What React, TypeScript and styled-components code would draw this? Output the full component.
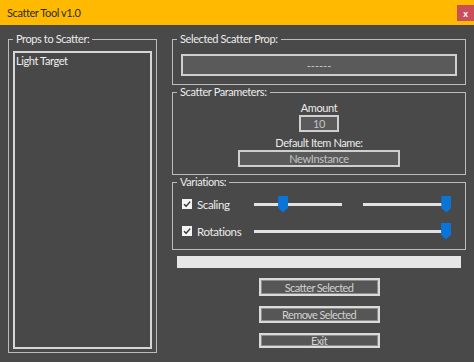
import React from 'react';
import styled, { createGlobalStyle } from 'styled-components';

const GlobalStyle = createGlobalStyle`
    html, body {
        margin: 0;
        padding: 0;
        background: #494949;
    }
    body {
        font-family: Lato, "Open Sans", sans-serif;
        letter-spacing: -0.4px;
    }
`;

type SliderPropsType = {
    width: number
    value: number
}

const Slider = (props: SliderPropsType) => {
    return (
        <Track $width={props.width}>
            <Thumb style={{left: `${props.value * 100}%`}}/>
        </Track>
    );
};

const Check = () => (
    <svg width="10" height="10" viewBox="0 0 10 10">
        <rect x="0" y="0" width="10" height="10" fill="#f4f4f4"/>
        <path d="M2 5.2 L4.1 7.3 L8.2 2.6" stroke="#333" strokeWidth="1.4" fill="none"/>
    </svg>
);

export default function App() {
    return (
        <Window>
            <GlobalStyle/>
            <TitleBar>
                <Title>Scatter Tool v1.0</Title>
                <CloseButton>x</CloseButton>
            </TitleBar>
            <Body>
                <Group $height={321}>
                    <Legend>Props to Scatter:</Legend>
                    <ListBox>
                        <ListItem>Light Target</ListItem>
                    </ListBox>
                </Group>
                <RightColumn>
                    <Group $height={53}>
                        <Legend>Selected Scatter Prop:</Legend>
                        <SelectedButton>------</SelectedButton>
                    </Group>
                    <Group $height={90}>
                        <Legend>Scatter Parameters:</Legend>
                        <Params>
                            <FieldLabel>Amount</FieldLabel>
                            <TextBox $width={40} readOnly value="10"/>
                            <FieldLabel>Default Item Name:</FieldLabel>
                            <TextBox $width={162} readOnly value="NewInstance"/>
                        </Params>
                    </Group>
                    <Group $height={75}>
                        <Legend>Variations:</Legend>
                        <Variations>
                            <VariationRow>
                                <CheckLabel><Check/>Scaling</CheckLabel>
                                <Sliders>
                                    <Slider width={88} value={0.33}/>
                                    <Slider width={85} value={0.98}/>
                                </Sliders>
                            </VariationRow>
                            <VariationRow>
                                <CheckLabel><Check/>Rotations</CheckLabel>
                                <Sliders>
                                    <Slider width={194} value={0.99}/>
                                </Sliders>
                            </VariationRow>
                        </Variations>
                    </Group>
                    <Progress/>
                    <Actions>
                        <ActionButton $height={18}>Scatter Selected</ActionButton>
                        <ActionButton $height={17}>Remove Selected</ActionButton>
                        <ActionButton $height={15}>Exit</ActionButton>
                    </Actions>
                </RightColumn>
            </Body>
        </Window>
    );
}

const Window = styled.div`
    width: 474px;
    height: 362px;
    background: #494949;
    display: flex;
    flex-direction: column;
    overflow: hidden;
`;

const TitleBar = styled.div`
    height: 25px;
    background: #ffba00;
    display: flex;
    align-items: flex-start;
    justify-content: space-between;
    padding-left: 7px;
`;

const Title = styled.span`
    font-size: 11px;
    line-height: 26px;
    color: #2b2b2b;
`;

const CloseButton = styled.button`
    margin-top: 5px;
    width: 17px;
    height: 16px;
    border: 0;
    padding: 0;
    background: #c94f5b;
    color: #fff;
    font-family: inherit;
    font-size: 9px;
    font-weight: 700;
    line-height: 15px;
`;

const Body = styled.div`
    display: grid;
    grid-template-columns: 149px 294px;
    column-gap: 15px;
    padding: 7px 0 0 8px;
`;

const RightColumn = styled.div`
    display: flex;
    flex-direction: column;
`;

const Group = styled.fieldset<{ $height: number }>`
    margin: 0 0 0 0;
    min-width: 0;
    box-sizing: border-box;
    height: ${props => props.$height}px;
    border: 1px solid #bcbcbc;
    padding: 0 4px;
    display: flex;
    flex-direction: column;
`;

const Legend = styled.legend`
    padding: 0 3px;
    font-size: 11px;
    line-height: 14px;
    color: #ececec;
`;

const ListBox = styled.div`
    margin-top: 5px;
    height: 298px;
    box-sizing: border-box;
    border: 2px solid #d6d6d6;
    background: #484848;
    padding: 1px 1px;
`;

const ListItem = styled.div`
    font-size: 11px;
    line-height: 13px;
    color: #f0f0f0;
`;

const SelectedButton = styled.button`
    margin: 8px 4px 0;
    height: 22px;
    box-sizing: border-box;
    border: 2px solid #cfcfcf;
    background: #5a5a5a;
    color: #cccccc;
    font-family: inherit;
    font-size: 11px;
    letter-spacing: 0;
    padding: 0;
`;

const Params = styled.div`
    display: flex;
    flex-direction: column;
    align-items: center;
    padding-top: 2px;
`;

const FieldLabel = styled.div`
    font-size: 11px;
    line-height: 14px;
    color: #ececec;
    & + input {
        margin-bottom: 4px;
    }
`;

const TextBox = styled.input<{ $width: number }>`
    width: ${props => props.$width}px;
    height: 17px;
    box-sizing: border-box;
    border: 2px solid #cfcfcf;
    background: #5a5a5a;
    color: #c4c4c4;
    font-family: inherit;
    font-size: 11px;
    letter-spacing: -0.3px;
    text-align: center;
    padding: 0;
    outline: none;
`;

const Variations = styled.div`
    display: flex;
    flex-direction: column;
    gap: 7px;
    padding: 5px 0 0 5px;
`;

const VariationRow = styled.div`
    display: grid;
    grid-template-columns: 72px 1fr;
    align-items: center;
    height: 20px;
`;

const CheckLabel = styled.label`
    display: flex;
    align-items: center;
    gap: 5px;
    font-size: 11.5px;
    color: #ececec;
`;

const Sliders = styled.div`
    display: flex;
    align-items: center;
    gap: 21px;
`;

const Track = styled.div<{ $width: number }>`
    position: relative;
    width: ${props => props.$width}px;
    height: 3px;
    background: #e2e2e2;
`;

const Thumb = styled.div`
    position: absolute;
    top: -7px;
    width: 10px;
    height: 17px;
    margin-left: -5px;
    background: #0a74d8;
    clip-path: polygon(0 0, 100% 0, 100% 72%, 50% 100%, 0 72%);
`;

const Progress = styled.div`
    margin: 6px 0 0 5px;
    width: 284px;
    height: 12px;
    background: #e6e6e6;
`;

const Actions = styled.div`
    display: flex;
    flex-direction: column;
    align-items: center;
    gap: 10px;
    padding-top: 10px;
`;

const ActionButton = styled.button<{ $height: number }>`
    width: 121px;
    height: ${props => props.$height}px;
    box-sizing: border-box;
    border: 2px solid #dadada;
    box-shadow: inset 0 0 0 1px #8c8c8c;
    background: #565656;
    color: #d2d2d2;
    font-family: Lato, sans-serif;
    font-size: 11px;
    letter-spacing: -0.6px;
    line-height: 1;
    padding: 0;
`;
